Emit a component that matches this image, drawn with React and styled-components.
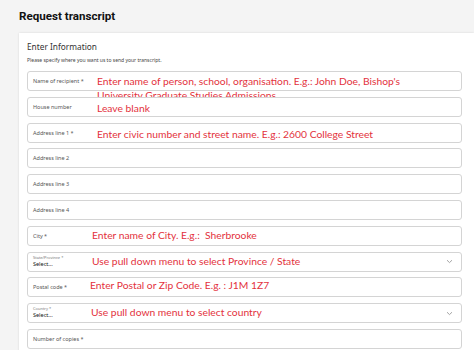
import styled, { createGlobalStyle } from 'styled-components'

const GlobalStyle = createGlobalStyle`
  html, body {
    margin: 0;
    padding: 0;
    background: #f4f4f4;
    overflow: hidden;
  }
  body {
    font-family: "Noto Sans", "Open Sans", sans-serif;
    color: #222;
  }
`

const fields = [
  { label: 'Name of recipient *', note: ['Enter name of person, school, organisation. E.g.: John Doe, Bishop\'s', 'University Graduate Studies Admissions'], noteX: 69, noteY: 3 },
  { label: 'House number', note: ['Leave blank'], noteX: 69, noteY: 4 },
  { label: 'Address line 1 *', note: ['Enter civic number and street name. E.g.: 2600 College Street'], noteX: 69, noteY: 4 },
  { label: 'Address line 2' },
  { label: 'Address line 3' },
  { label: 'Address line 4' },
  { label: 'City *', note: ['Enter name of City. E.g.:  Sherbrooke'], noteX: 64, noteY: 2 },
  { label: 'State/Province *', select: true, note: ['Use pull down menu to select Province / State'], noteX: 64, noteY: 2 },
  { label: 'Postal code *', note: ['Enter Postal or Zip Code. E.g. : J1M 1Z7'], noteX: 62, noteY: 1 },
  { label: 'Country *', select: true, note: ['Use pull down menu to select country'], noteX: 63, noteY: 2 },
  { label: 'Number of copies *' }
]

const Chevron = () => (
  <svg width='7' height='5' viewBox='0 0 7 5'>
    <path d='M1 1.2 L3.5 3.6 L6 1.2' fill='none' stroke='#9a9a9a' strokeWidth='0.9' />
  </svg>
)

const App = () => (
  <Page>
    <GlobalStyle />
    <Heading>Request transcript</Heading>
    <Card>
      <CardTitle>Enter Information</CardTitle>
      <CardHint>Please specify where you want us to send your transcript.</CardHint>
      <FieldList>
        {fields.map(f => (
          <Field key={f.label}>
            {f.select ? (
              <SelectBody>
                <TinyLabel>{f.label}</TinyLabel>
                <SelectValue>Select...</SelectValue>
              </SelectBody>
            ) : (
              <FieldLabel>{f.label}</FieldLabel>
            )}
            {f.select && <Chevron />}
            {f.note && (
              <Note $x={f.noteX} $y={f.noteY}>
                {f.note.map(line => <div key={line}>{line}</div>)}
              </Note>
            )}
          </Field>
        ))}
      </FieldList>
    </Card>
  </Page>
)

const Page = styled.div`
  padding: 8px 0 0 19px;
  height: 350px;
  box-sizing: border-box;
`

const Heading = styled.h1`
  margin: 0;
  font-family: Roboto, "Liberation Sans", sans-serif;
  font-size: 11.6px;
  font-weight: 700;
  line-height: 17px;
  color: #111;
`

const Card = styled.div`
  margin-top: 8px;
  background: #fff;
  box-shadow: 0 0 2px rgba(0, 0, 0, 0.12);
  padding: 7px 12px 20px 8px;
`

const CardTitle = styled.div`
  font-size: 8.3px;
  line-height: 13px;
  color: #333;
`

const CardHint = styled.div`
  font-size: 5px;
  line-height: 7px;
  margin-top: 4px;
  color: #444;
`

const FieldList = styled.div`
  margin-top: 7px;
  display: grid;
  row-gap: 5.8px;
`

const Field = styled.div`
  position: relative;
  height: 20px;
  box-sizing: border-box;
  border: 1px solid #d4d4d4;
  border-radius: 3px;
  background: #fff;
  display: flex;
  align-items: center;
  justify-content: space-between;
  padding: 0 8px 0 5px;
`

const FieldLabel = styled.span`
  font-size: 5.5px;
  color: #555;
`

const SelectBody = styled.div`
  display: flex;
  flex-direction: column;
  line-height: 1;
`

const TinyLabel = styled.span`
  font-size: 4px;
  color: #777;
`

const SelectValue = styled.span`
  font-size: 5.5px;
  color: #111;
  margin-top: 2px;
`

const Note = styled.div`
  position: absolute;
  left: ${p => p.$x}px;
  top: ${p => p.$y}px;
  font-family: Lato, "Liberation Sans", sans-serif;
  font-size: 10.3px;
  line-height: 13.5px;
  color: #e3323d;
  white-space: pre;
  pointer-events: none;
`

export default App
